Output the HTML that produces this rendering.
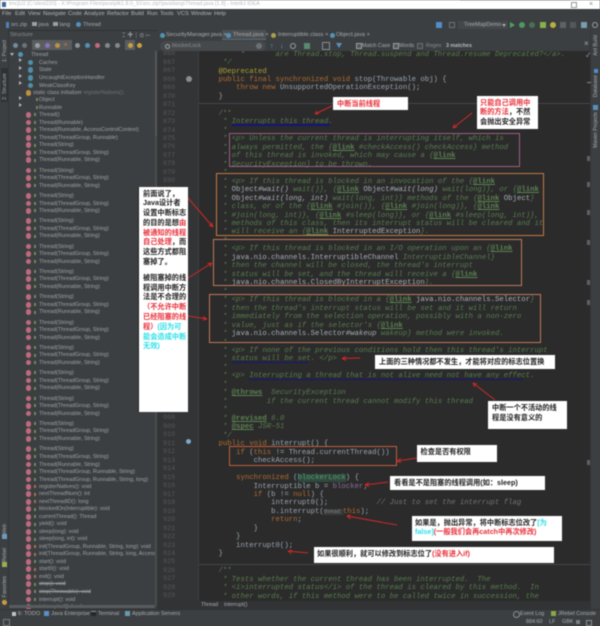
<!DOCTYPE html>
<html><head><meta charset="utf-8"><style>
html,body{margin:0;padding:0;background:#3c3f41}
#w{position:relative;width:600px;height:626px;overflow:hidden;background:#3c3f41;filter:blur(.42px);font-family:"Liberation Sans","Noto Sans CJK SC",sans-serif}
#w div,#w span.a{position:absolute;white-space:nowrap}
.u{font-size:5.6px;color:#a9adb0;line-height:8px}
.mn{font-size:5.8px;color:#b4b7b9;top:9.5px;line-height:8px}
.r{left:26px;padding-left:13px;font-size:5.4px;line-height:8px;color:#9fa3a6;height:8px}
.r i{position:absolute;left:0;top:1.2px;width:5.4px;height:5.4px;border-radius:50%;background:#bf6a7e}
.r b{position:absolute;left:8px;top:2.4px;width:1.6px;height:3px;background:#6f8a58}
.r b.o{background:#a8704a}
.t{left:28px;padding-left:11px}
.t i{background:#4f8fa8}
.st{text-decoration:line-through}
pre{margin:0;font-family:"Liberation Mono",monospace;font-size:7.32px;line-height:8.47px;color:#9aa6b2}
.c,.c *{font-style:italic}
.c{color:#587d4f}
.k{color:#b06c30;font-style:normal}
.l{color:#5c8352;font-weight:bold;font-style:normal;text-decoration:underline}
.j{color:#a8b0b6;font-style:normal}
.jj{color:#a8b0b6}
.g{color:#5b7a50}
.d{color:#a8a030}
.b{background:#fff;color:#222;font-size:7.2px;line-height:9.8px;font-weight:bold}
.red{color:#e8303a}
.cy{color:#2ce0e8}
.rc{border:1px solid #b86a4a;box-sizing:border-box}
.tab{font-size:5.8px;color:#a9adb0;top:31px;line-height:8px}
.ic{width:5px;height:5px;border-radius:50%;background:#4f93b8}
.tb{width:5px;height:5px;top:42.5px;border-radius:50%}
.v{writing-mode:vertical-rl;transform:rotate(180deg);font-size:5.2px;color:#a9adb0}
</style></head><body><div id="w">

<!-- title bar -->
<div style="left:0;top:0;width:600px;height:9px;background:#fff"></div>
<div style="left:2px;top:2px;width:4px;height:5px;background:#3d6a9a"></div>
<div style="left:9px;top:1px;font-size:5.4px;line-height:7px;color:#b9bcc0">tmcjU2 [C:\dest220] - X:\Program Files\java\jdk1.8.0_91\src.zip!\java\lang\Thread.java [1.8] - IntelliJ IDEA</div>
<div style="left:460px;top:0;width:110px;height:1px;background:#e4e4e4"></div>
<div style="left:571px;top:2px;width:4px;height:4px;border:1px solid #999"></div>
<div style="left:589px;top:0;font-size:7px;line-height:9px;color:#888">×</div>

<!-- menu -->
<div class="mn" style="left:2px">File</div><div class="mn" style="left:15px">Edit</div><div class="mn" style="left:28px">View</div><div class="mn" style="left:43px">Navigate</div><div class="mn" style="left:68px">Code</div><div class="mn" style="left:84px">Analyze</div><div class="mn" style="left:107px">Refactor</div><div class="mn" style="left:131px">Build</div><div class="mn" style="left:147px">Run</div><div class="mn" style="left:160px">Tools</div><div class="mn" style="left:177px">VCS</div><div class="mn" style="left:191px">Window</div><div class="mn" style="left:214px">Help</div>

<!-- nav bar -->
<div style="left:6px;top:22px;width:3px;height:6px;background:#4f82b8"></div>
<div class="u" style="left:11px;top:20.5px">src.zip</div>
<div style="left:32px;top:22px;width:5px;height:4px;background:#9aa0a6"></div><div class="u" style="left:38.5px;top:20.5px">java</div>
<div style="left:53px;top:22px;width:5px;height:4px;background:#9aa0a6"></div><div class="u" style="left:59.5px;top:20.5px">lang</div>
<div class="ic" style="left:76px;top:22px"></div><div class="u" style="left:83px;top:20.5px">Thread</div>
<div style="left:436px;top:22px;width:6px;height:6px;background:#4f8fcc"></div>
<div style="left:449px;top:22px;width:6px;height:6px;border:1px solid #6e7275;box-sizing:border-box"></div>
<div style="left:458px;top:21px;width:50px;height:8px;background:#45484a"></div>
<div class="u" style="left:464px;top:20.5px">TreeMapDemo</div>
<div style="left:502px;top:23.5px;border:2px solid transparent;border-top:3px solid #aaa"></div>
<div style="left:510px;top:21.5px;border:3.5px solid transparent;border-left:5px solid #49a55a"></div>
<div style="left:519px;top:22px;width:6px;height:6px;border-radius:50%;background:#4a9a5e"></div>
<div style="left:529px;top:22px;width:6px;height:6px;border-radius:50%;background:#4c6e55"></div>
<div style="left:540px;top:22px;width:6px;height:6px;background:#8ab04a"></div>
<div style="left:550px;top:22px;width:6px;height:6px;border-radius:50%;background:#b8b040"></div>
<div style="left:560px;top:22px;width:6px;height:6px;background:#5e6265"></div>
<div style="left:570px;top:22px;width:6px;height:6px;background:#54585b"></div>
<div style="left:581px;top:22px;width:6px;height:6px;background:#7a9cb0"></div>
<div style="left:592px;top:22px;width:4px;height:4px;border:1px solid #9a9da0;border-radius:50%"></div>
<div style="left:0;top:29.5px;width:600px;height:.5px;background:#2f3133"></div>

<!-- left strip -->
<div style="left:0;top:30px;width:8px;height:578px;background:#3c3f41;border-right:1px solid #333537"></div>
<div class="v" style="left:1.5px;top:34px;height:28px">1: Project</div>
<div style="left:1px;top:68px;width:7px;height:34px;background:#2f3234"></div>
<div class="v" style="left:1.5px;top:70px;height:30px">2: Structure</div>
<div class="v" style="left:1.5px;top:524px">Web</div>
<div style="left:2px;top:534px;width:5px;height:5px;background:#6f9ac0"></div>
<div class="v" style="left:1.5px;top:548px">JRebel</div>
<div style="left:2px;top:562px;width:5px;height:5px;background:#9ab050"></div>
<div class="v" style="left:1.5px;top:576px">2: Favorites</div>
<div style="left:2px;top:600px;width:5px;height:5px;background:#c89a3a;border-radius:50%"></div>

<!-- structure panel -->
<div class="u" style="left:10px;top:31px;color:#8b8f92">Structure</div>
<div style="left:122px;top:32px;font-size:6px;color:#8f9396;line-height:8px">⌶ ✚ ⏐ ⚙ ⊢</div>
<div style="left:32px;top:40px;width:40px;height:10px;background:#5a5d60"></div>
<div style="left:125px;top:40px;width:10px;height:10px;background:#5a5d60"></div>
<div class="tb" style="left:13px;background:#6c8ca0"></div><div class="tb" style="left:22px;background:#6c7478"></div>
<div class="tb" style="left:35px;background:#9a9ea2"></div><div class="tb" style="left:45px;background:#8a74b8"></div><div class="tb" style="left:55px;background:#c09040"></div><div class="tb" style="left:64px;background:#a06a40;width:3px;height:3px;top:43px"></div><div class="tb" style="left:75px;background:#8c9296"></div><div class="tb" style="left:85px;background:#4f93b8"></div><div class="tb" style="left:95px;background:#bf6a7e"></div><div class="tb" style="left:105px;background:#82888c"></div><div class="tb" style="left:115px;background:#82888c"></div><div class="tb" style="left:128px;background:#c8a040"></div><div class="tb" style="left:137px;background:#c8a040"></div>

<div style="left:10px;top:53px;border:2.2px solid transparent;border-top:3px solid #b0b3b6"></div>
<div class="ic" style="left:18px;top:52px"></div><div class="r" style="left:26px;padding-left:5px;top:51px">Thread</div>
<div class="r t" style="top:58.7px"><i></i>Caches</div>
<div class="r t" style="top:66px"><i></i>State</div>
<div class="r t" style="top:74px"><i></i>UncaughtExceptionHandler</div>
<div class="r t" style="top:81.5px"><i></i>WeakClassKey</div>
<div class="r" style="left:26px;padding-left:7px;top:89px"><i style="background:#c09040"></i>static class initializer <span style="color:#6f7376">registerNatives();</span></div>
<div class="r t" style="top:96px"><b></b>Object</div>
<div class="r t" style="top:103.5px"><b></b>Runnable</div>
<div style="left:19px;top:58px;border:2px solid transparent;border-left:3px solid #b0b3b6"></div>
<div style="left:19px;top:66px;border:2px solid transparent;border-left:3px solid #b0b3b6"></div>
<div style="left:19px;top:74px;border:2px solid transparent;border-left:3px solid #b0b3b6"></div>
<div style="left:19px;top:81px;border:2px solid transparent;border-left:3px solid #b0b3b6"></div>
<div style="left:19px;top:96px;border:2px solid transparent;border-left:3px solid #b0b3b6"></div>
<div style="left:19px;top:103px;border:2px solid transparent;border-left:3px solid #b0b3b6"></div>

<div class="r" style="top:111px"><i></i><b></b>Thread()</div>
<div class="r" style="top:118.7px"><i></i><b></b>Thread(Runnable)</div>
<div class="r" style="top:126px"><i></i><b></b>Thread(Runnable, AccessControlContext)</div>
<div class="r" style="top:134px"><i></i><b></b>Thread(ThreadGroup, Runnable)</div>
<div class="r" style="top:141.3px"><i></i><b></b>Thread(String)</div>
<div class="r" style="top:149px"><i></i><b></b>Thread(ThreadGroup, String)</div>
<div class="r" style="top:156.3px"><i></i><b></b>Thread(Runnable, String)</div>
<div class="r" style="top:166.7px"><i></i><b></b>Thread(String)</div>
<div class="r" style="top:174px"><i></i><b></b>Thread(ThreadGroup, String)</div>
<div class="r" style="top:181.7px"><i></i><b></b>Thread(Runnable, String)</div>
<div class="r" style="top:192px"><i></i><b></b>Thread(String)</div>
<div class="r" style="top:199.7px"><i></i><b></b>Thread(ThreadGroup, String)</div>
<div class="r" style="top:207px"><i></i><b></b>Thread(Runnable, String)</div>
<div class="r" style="top:217px"><i></i><b></b>Thread(String)</div>
<div class="r" style="top:224.7px"><i></i><b></b>Thread(ThreadGroup, String)</div>
<div class="r" style="top:232.3px"><i></i><b></b>Thread(Runnable, String)</div>
<div class="r" style="top:242.7px"><i></i><b></b>Thread(String)</div>
<div class="r" style="top:250px"><i></i><b></b>Thread(ThreadGroup, String)</div>
<div class="r" style="top:257.7px"><i></i><b></b>Thread(Runnable, String)</div>
<div class="r" style="top:268px"><i></i><b></b>Thread(String)</div>
<div class="r" style="top:275.3px"><i></i><b></b>Thread(ThreadGroup, String)</div>
<div class="r" style="top:283px"><i></i><b></b>Thread(Runnable, String)</div>
<div class="r" style="top:293px"><i></i><b></b>Thread(String)</div>
<div class="r" style="top:301px"><i></i><b></b>Thread(ThreadGroup, String)</div>
<div class="r" style="top:308.3px"><i></i><b></b>Thread(Runnable, String)</div>
<div class="r" style="top:318.7px"><i></i><b></b>Thread(String)</div>
<div class="r" style="top:326px"><i></i><b></b>Thread(ThreadGroup, String)</div>
<div class="r" style="top:333.7px"><i></i><b></b>Thread(Runnable, String)</div>
<div class="r" style="top:343.7px"><i></i><b></b>Thread(String)</div>
<div class="r" style="top:351.3px"><i></i><b></b>Thread(ThreadGroup, String)</div>
<div class="r" style="top:358.7px"><i></i><b></b>Thread(Runnable, String)</div>
<div class="r" style="top:369px"><i></i><b></b>Thread(String)</div>
<div class="r" style="top:376.7px"><i></i><b></b>Thread(ThreadGroup, String)</div>
<div class="r" style="top:384.3px"><i></i><b></b>Thread(Runnable, String)</div>
<div class="r" style="top:394.7px"><i></i><b></b>Thread(String)</div>
<div class="r" style="top:402px"><i></i><b></b>Thread(ThreadGroup, String)</div>
<div class="r" style="top:409.7px"><i></i><b></b>Thread(Runnable, String)</div>
<div class="r" style="top:420px"><i></i><b></b>Thread(String)</div>
<div class="r" style="top:427.3px"><i></i><b></b>Thread(ThreadGroup, String)</div>
<div class="r" style="top:435px"><i></i><b></b>Thread(Runnable, String)</div>
<div class="r" style="top:445.3px"><i></i><b></b>Thread(String)</div>
<div class="r" style="top:453px"><i></i><b></b>Thread(ThreadGroup, String)</div>
<div class="r" style="top:460.7px"><i></i><b></b>Thread(Runnable, String)</div>
<div class="r" style="top:468px"><i></i><b></b>Thread(ThreadGroup, Runnable, String)</div>
<div class="r" style="top:475.7px"><i></i><b></b>Thread(ThreadGroup, Runnable, String, long)</div>
<div class="r" style="top:483px"><i></i><b class="o"></b>registerNatives(): void</div>
<div class="r" style="top:490.3px"><i></i><b class="o"></b>nextThreadNum(): int</div>
<div class="r" style="top:498px"><i></i><b class="o"></b>nextThreadID(): long</div>
<div class="r" style="top:505.3px"><i></i><b></b>blockedOn(Interruptible): void</div>
<div class="r" style="top:513px"><i></i><b></b>currentThread(): Thread</div>
<div class="r" style="top:520.3px"><i></i><b></b>yield(): void</div>
<div class="r" style="top:528px"><i></i><b></b>sleep(long): void</div>
<div class="r" style="top:535.3px"><i></i><b></b>sleep(long, int): void</div>
<div class="r" style="top:543px"><i></i><b class="o"></b>init(ThreadGroup, Runnable, String, long): void</div>
<div class="r" style="top:550.3px;width:116px;overflow:hidden"><i></i><b class="o"></b>init(ThreadGroup, Runnable, String, long, AccessControlContext): void</div>
<div class="r" style="top:558px"><i></i><b></b>start(): void</div>
<div class="r" style="top:565.3px"><i></i><b class="o"></b>start0(): void</div>
<div class="r" style="top:573px"><i></i><b class="o"></b>exit(): void</div>
<div class="r st" style="top:580.3px"><i></i><b></b>stop(): void</div>
<div class="r st" style="top:588px"><i></i><b></b>stop(Throwable): void</div>
<div class="r" style="top:595.7px"><i></i><b></b>interrupt(): void</div>
<div class="r" style="top:603px"><i></i><b></b>interrupted(): boolean</div>
<div style="left:9px;top:605px;width:146px;height:2.5px;background:#595c5e;border-radius:1px"></div>

<!-- gutter + editor -->
<div style="left:155px;top:51px;width:2px;height:85px;background:#55585a"></div>
<div style="left:155px;top:136px;width:2px;height:470px;background:#4a4d4f"></div>
<div style="left:157px;top:40px;width:42px;height:568px;background:#323436"></div>
<div style="left:198px;top:40px;width:1px;height:568px;background:#3c3e40"></div>
<div style="left:199px;top:40px;width:391px;height:568px;background:#2b2b2b"></div>
<div style="left:199px;top:564px;width:391px;height:.6px;background:#44474a"></div>
<div style="left:199px;top:103px;width:391px;height:.6px;background:#44474a"></div>

<!-- line numbers -->
<div style="left:157px;top:51px;width:20px;height:550px;overflow:hidden">
<pre style="position:absolute;left:6px;top:-.7px;color:#55585b;font-size:6.8px">866
867
867
868
869
870
871
872
873
874
875
876
877
878
879
880
881
882
883
884
885
886
887
888
889
890
891
892
893
894
895
896
897
898
899
900
901
902
903
904
905
906
907
908
909
910
911
912
913
914
915
916
917
918
919
920
921
922
923
924
925
926
927
928
929</pre></div>
<div style="left:186px;top:76px;width:6px;height:6px;border-radius:50%;background:#8a8d90"></div>
<div style="left:186px;top:439px;width:5px;height:5px;border-radius:50%;background:#7fa8c8"></div>

<!-- code -->
<div style="left:199px;top:51px;width:391px;height:550px;overflow:hidden">
<pre style="position:absolute;left:19.5px;top:-.4px"><span class="c">     *       are Thread.stop, Thread.suspend and Thread.resume Deprecated?&lt;/a&gt;.</span>
<span class="c"> */</span>
<span class="d">@Deprecated</span>
<span class="k">public final synchronized void</span> stop(Throwable obj) {
    <span class="k">throw new</span> UnsupportedOperationException();
}

<span class="g">/**</span>
<span class="c"> * Interrupts this thread.</span>
<span class="c"> *</span>
<span class="c"> * &lt;p&gt; Unless the current thread is interrupting itself, which is</span>
<span class="c"> * always permitted, the {<span class="l">@link</span> #checkAccess() checkAccess} method</span>
<span class="c"> * of this thread is invoked, which may cause a {<span class="l">@link</span></span>
<span class="c"> * SecurityException} to be thrown.</span>
<span class="c"> *</span>
<span class="c"> * &lt;p&gt; If this thread is blocked in an invocation of the {<span class="l">@link</span></span>
<span class="c"> * <span class="j">Object</span><span class="jj">#wait()</span> wait()}, {<span class="l">@link</span> <span class="j">Object</span><span class="jj">#wait(long)</span> wait(long)}, or {<span class="l">@link</span></span>
<span class="c"> * <span class="j">Object</span><span class="jj">#wait(long, int)</span> wait(long, int)} methods of the {<span class="l">@link</span> <span class="j">Object</span>}</span>
<span class="c"> * class, or of the {<span class="l">@link</span> #join()}, {<span class="l">@link</span> #join(long)}, {<span class="l">@link</span></span>
<span class="c"> * #join(long, int)}, {<span class="l">@link</span> #sleep(long)}, or {<span class="l">@link</span> #sleep(long, int)},</span>
<span class="c"> * methods of this class, then its interrupt status will be cleared and it</span>
<span class="c"> * will receive an {<span class="l">@link</span> <span class="j">InterruptedException</span>}.</span>
<span class="c"> *</span>
<span class="c"> * &lt;p&gt; If this thread is blocked in an I/O operation upon an {<span class="l">@link</span></span>
<span class="c"> * <span class="j">java.nio.channels.InterruptibleChannel</span> InterruptibleChannel}</span>
<span class="c"> * then the channel will be closed, the thread's interrupt</span>
<span class="c"> * status will be set, and the thread will receive a {<span class="l">@link</span></span>
<span class="c"> * <span class="j">java.nio.channels.ClosedByInterruptException</span>}.</span>
<span class="c"> *</span>
<span class="c"> * &lt;p&gt; If this thread is blocked in a {<span class="l">@link</span> <span class="j">java.nio.channels.Selector</span>}</span>
<span class="c"> * then the thread's interrupt status will be set and it will return</span>
<span class="c"> * immediately from the selection operation, possibly with a non-zero</span>
<span class="c"> * value, just as if the selector's {<span class="l">@link</span></span>
<span class="c"> * <span class="j">java.nio.channels.Selector</span><span class="jj">#wakeup</span> wakeup} method were invoked.</span>
<span class="c"> *</span>
<span class="c"> * &lt;p&gt; If none of the previous conditions hold then this thread's interrupt</span>
<span class="c"> * status will be set. &lt;/p&gt;</span>
<span class="c"> *</span>
<span class="c"> * &lt;p&gt; Interrupting a thread that is not alive need not have any effect.</span>
<span class="c"> *</span>
<span class="c"> * <span class="l">@throws</span>  SecurityException</span>
<span class="c"> *         if the current thread cannot modify this thread</span>
<span class="c"> *</span>
<span class="c"> * <span class="l">@revised</span> 6.0</span>
<span class="c"> * <span class="l">@spec</span> JSR-51</span>
<span class="c"> */</span>
<span class="k">public void</span> interrupt() {
    <span class="k">if</span> (<span class="k">this</span> != Thread.currentThread())
        checkAccess();

    <span class="k">synchronized</span> (<span style="background:#2f4a3c;color:#5a9a78">blockerLock</span>) {
        Interruptible b = <span style="color:#8a6f9a">blocker</span>;
        <span class="k">if</span> (b != <span class="k">null</span>) {
            interrupt0();           <span style="color:#707478;font-style:italic">// Just to set the interrupt flag</span>
            b.interrupt(<span style="font-family:'Liberation Sans',sans-serif;font-size:5.6px;color:#808488;background:#3a3c3e">thread: </span><span class="k">this</span>);
            <span class="k">return</span>;
        }
    }
    interrupt0();
}

<span class="g">/**</span>
<span class="c"> * Tests whether the current thread has been interrupted.  The</span>
<span class="c"> * &lt;i&gt;interrupted status&lt;/i&gt; of the thread is cleared by this method.  In</span>
<span class="c"> * other words, if this method were to be called twice in succession, the</span>
<span class="c"> * second call would return false (unless the current thread were</span></pre>
</div>

<!-- blue underlines -->
<div style="left:232px;top:124px;width:98px;height:1.5px;background:#15157a"></div>
<div style="left:232px;top:361.5px;width:76px;height:1.5px;background:#15157a"></div>
<div style="left:249px;top:378.5px;width:274px;height:1.5px;background:#15157a"></div>

<!-- tabs / search -->
<div style="left:157px;top:30px;width:433px;height:10px;background:#3c3f41"></div>
<div style="left:222px;top:30px;width:44px;height:10px;background:#4d5053;border-bottom:1px solid #5a6a78;box-sizing:border-box"></div>
<div class="ic" style="left:160px;top:32.5px"></div><div class="tab" style="left:166px">SecurityManager.java ×</div>
<div class="ic" style="left:226px;top:32.5px"></div><div class="tab" style="left:233px">Thread.java ×</div>
<div class="ic" style="left:271px;top:32.5px;background:#a8a050"></div><div class="tab" style="left:278px">Interruptible.class ×</div>
<div class="ic" style="left:330px;top:32.5px"></div><div class="tab" style="left:336px">Object.java ×</div>
<div style="left:157px;top:40px;width:433px;height:11px;background:#3c3f41"></div>
<div style="left:160px;top:41px;width:106px;height:10px;background:#46494b;border-radius:5px"></div>
<div style="left:165px;top:44px;width:3px;height:3px;border:1px solid #a0a4a8;border-radius:50%"></div>
<div style="left:172px;top:42.2px;font-size:5.4px;line-height:8px;color:#8f9396">blockerLock</div>
<div style="left:256px;top:43px;width:6px;height:6px;border-radius:50%;background:#6c7074"></div>
<div style="left:270px;top:43px;color:#4f9fe0;font-size:7px;line-height:7px;font-weight:bold">↑</div>
<div style="left:280px;top:43px;color:#4f9fe0;font-size:7px;line-height:7px;font-weight:bold">↓</div>
<div style="left:290px;top:43px;width:4px;height:4px;border:1px solid #9a9ea2;border-radius:50%"></div>
<div style="left:304px;top:43px;width:6px;height:6px;background:#5a8a70"></div>
<div style="left:322px;top:42px;width:6px;height:6px;border:1px solid #8a8e92"></div>
<div style="left:336px;top:43px;border:3px solid transparent;border-top:5px solid #5a90c0"></div>
<div style="left:356px;top:43px;width:4px;height:4px;border:.7px solid #9a9ea2;background:#55585a"></div><div class="u" style="left:362px;top:42px;font-size:5.3px">Match Case</div>
<div style="left:393px;top:43px;width:4px;height:4px;border:.7px solid #9a9ea2;background:#55585a"></div><div class="u" style="left:399px;top:42px;font-size:5.3px">Words</div>
<div style="left:417px;top:43px;width:4px;height:4px;border:.7px solid #6a6e72;background:#45484a"></div><div class="u" style="left:426px;top:42px;font-size:5.3px;color:#8a8e92">Regex</div>
<div class="u" style="left:446px;top:42px;font-size:5.3px;font-weight:bold;color:#b4b7b9">3 matches</div>
<div style="left:584px;top:39px;font-size:8px;line-height:9px;color:#a9adb0">×</div>

<!-- right strip -->
<div style="left:590px;top:30px;width:10px;height:578px;background:#3c3f41;border-left:1px solid #333537"></div>
<div class="v" style="left:593px;top:35px">Ant Build</div>
<div style="left:594px;top:69px;width:4px;height:4px;background:#4f8fcc"></div>
<div class="v" style="left:593px;top:75px">Database</div>
<div style="left:593px;top:105px;width:5px;height:5px;background:#5a8fb8"></div>
<div class="v" style="left:593px;top:112px">Maven Projects</div>
<div style="left:586px;top:53px;font-size:6px;line-height:7px;color:#b4b7b9">✓</div>
<div style="left:587px;top:82px;width:4px;height:1px;background:#888"></div>
<div style="left:587px;top:156px;width:3px;height:5px;background:#5e6164"></div>
<div style="left:587px;top:182px;width:3px;height:5px;background:#5e6164"></div>
<div style="left:587px;top:210px;width:3px;height:5px;background:#5e6164"></div>
<div style="left:587px;top:240px;width:3px;height:5px;background:#5e6164"></div>
<div style="left:587px;top:280px;width:3px;height:5px;background:#5e6164"></div>
<div style="left:587px;top:300px;width:3px;height:5px;background:#5e6164"></div>
<div style="left:587px;top:460px;width:3px;height:5px;background:#5e6164"></div>

<!-- breadcrumbs + bottom -->
<div style="left:157px;top:601px;width:433px;height:8px;background:#313335"></div>
<div class="u" style="left:201px;top:601px;font-size:5.4px">Thread</div>
<div class="u" style="left:224px;top:601px;font-size:5.4px">interrupt()</div>
<div style="left:0;top:608.5px;width:600px;height:17.5px;background:#3c3f41;border-top:1px solid #303234;box-sizing:border-box"></div>
<div style="left:12px;top:612px;width:4px;height:4px;background:#c0c4c8"></div>
<div class="u" style="left:18px;top:610px">6: TODO</div>
<div style="left:44px;top:611px;width:5px;height:5px;background:#5a90c8"></div>
<div class="u" style="left:51px;top:610px">Java Enterprise</div>
<div style="left:91px;top:611px;width:5px;height:5px;background:#25282a;border-top:1px solid #8a8e92;box-sizing:border-box"></div>
<div class="u" style="left:98px;top:610px">Terminal</div>
<div style="left:125px;top:611px;width:5px;height:5px;background:#6a9ab0"></div>
<div class="u" style="left:132px;top:610px">Application Servers</div>
<div style="left:513px;top:611px;width:5px;height:5px;border:.7px solid #8a8e92;border-radius:50%"></div>
<div class="u" style="left:520px;top:609.7px;font-size:5.4px">Event Log</div>
<div style="left:551px;top:611px;width:5px;height:5px;background:#8aa84a"></div>
<div class="u" style="left:558px;top:609.7px;font-size:5.4px">JRebel Console</div>
<div style="left:3px;top:619px;width:5px;height:5px;border:.7px solid #7a7e82"></div>
<div class="u" style="left:526px;top:618px;font-size:5.4px">884:60</div>
<div class="u" style="left:549px;top:618px;font-size:5.4px">LF</div>
<div class="u" style="left:562px;top:618px;font-size:5.4px">GBK</div>
<div style="left:576px;top:620px;width:4px;height:4px;background:#7a7e82"></div>
<div style="left:586px;top:620px;width:4px;height:4px;border:.7px solid #8a8e92"></div>

<!-- rect overlays -->
<div class="rc" style="left:229px;top:133px;width:291px;height:34px;border-color:#9a5f80"></div>
<div class="rc" style="left:216px;top:173px;width:328px;height:63px;border-color:#c47a46"></div>
<div class="rc" style="left:213px;top:239px;width:309px;height:47px;border-color:#c07a5c"></div>
<div class="rc" style="left:209px;top:294px;width:332px;height:49px;border-color:#c07a5c"></div>
<div class="rc" style="left:229px;top:446px;width:168px;height:20px;border-color:#c0603c"></div>

<!-- arrows -->
<svg style="position:absolute;left:0;top:0" width="600" height="626" fill="none" stroke="#d02828" stroke-width="1">
<path d="M332 106L315 114M315 114l4-.5M315 114l2-3"/>
<path d="M472 113L453 128M453 128l4-1.5M453 128l1.5-4"/>
<path d="M188 198L213 227M213 227l-1.5-4.5M213 227l-4-2"/>
<path d="M188 278L212 263M212 263l-4.5.8M212 263l-2 3.8"/>
<path d="M188 316L207 319M207 319l-4-2.4M207 319l-4.2 1.2"/>
<path d="M360 358L342 358.5M342 358.5l4-1.8M342 358.5l4 1.8"/>
<path d="M495 400L473 383M473 383l1.5 4M473 383l4 1.2"/>
<path d="M417 458L397 461M397 461l4-2.5M397 461l4 1.5"/>
<path d="M388 482L365 485M365 485l4-2.5M365 485l4 1.5"/>
<path d="M397 525L347 516M347 516l3.500 2.800M347 516l3.500-1.200"/>
<path d="M308 553L288 551M288 551l3.600 2.600M288 551l4-.8"/>
</svg>

<!-- annotation boxes -->
<div class="b" style="left:333px;top:97px;width:75px;height:13px;padding-left:4px;box-sizing:border-box;line-height:13px"><span class="red">中断当前线程</span></div>
<div class="b" style="left:477px;top:96px;width:61px;height:33px;padding:1.5px 0 0 3px;box-sizing:border-box"><span class="red">只能自己调用中<br>断的方法</span>，不然<br>会抛出安全异常</div>
<div class="b" style="left:138px;top:187px;width:50px;height:225px;padding:1.5px 0 0 4px;box-sizing:border-box;border-left:1px solid #222">前面说了，<br>Java设计者<br>设置中断标志<br>的目的是想<span class="red">由</span><br><span class="red">被通知的线程</span><br><span class="red">自己处理</span>，而<br>这些方式都阻<br>塞掉了。<br><div style="position:static;height:6px"></div>被阻塞掉的线<br>程调用中断方<br>法是不合理的<br><span class="red">（不允许中断<br>已经阻塞的线<br>程）</span><span class="cy">(因为可<br>能会造成中断<br>无效)</span></div>
<div class="b" style="left:375px;top:354.5px;width:180px;height:14.5px;padding-left:4px;box-sizing:border-box;line-height:14px">上面的三种情况都不发生，才能将对应的标志位置换</div>
<div class="b" style="left:488px;top:401px;width:79px;height:27.5px;padding:2px 0 0 4px;box-sizing:border-box">中断一个不活动的线<br>程是没有意义的</div>
<div class="b" style="left:417px;top:445px;width:80px;height:17px;padding-left:3.5px;box-sizing:border-box;line-height:14px">检查是否有权限</div>
<div class="b" style="left:390px;top:476px;width:155px;height:14px;padding-left:4px;box-sizing:border-box;line-height:13px">看看是不是阻塞的线程调用(如：sleep)</div>
<div class="b" style="left:412px;top:516px;width:150px;height:25px;padding:1.5px 0 0 3px;box-sizing:border-box">如果是，抛出异常，将中断标志位改了<span class="cy">[为</span><br><span class="cy">false]</span><span class="red">(一般我们会再catch中再次修改)</span></div>
<div class="b" style="left:314px;top:547px;width:240px;height:16px;padding-left:3px;box-sizing:border-box;line-height:13px">如果很顺利，就可以修改到标志位了<span class="red">(没有进入if)</span></div>

</div></body></html>
